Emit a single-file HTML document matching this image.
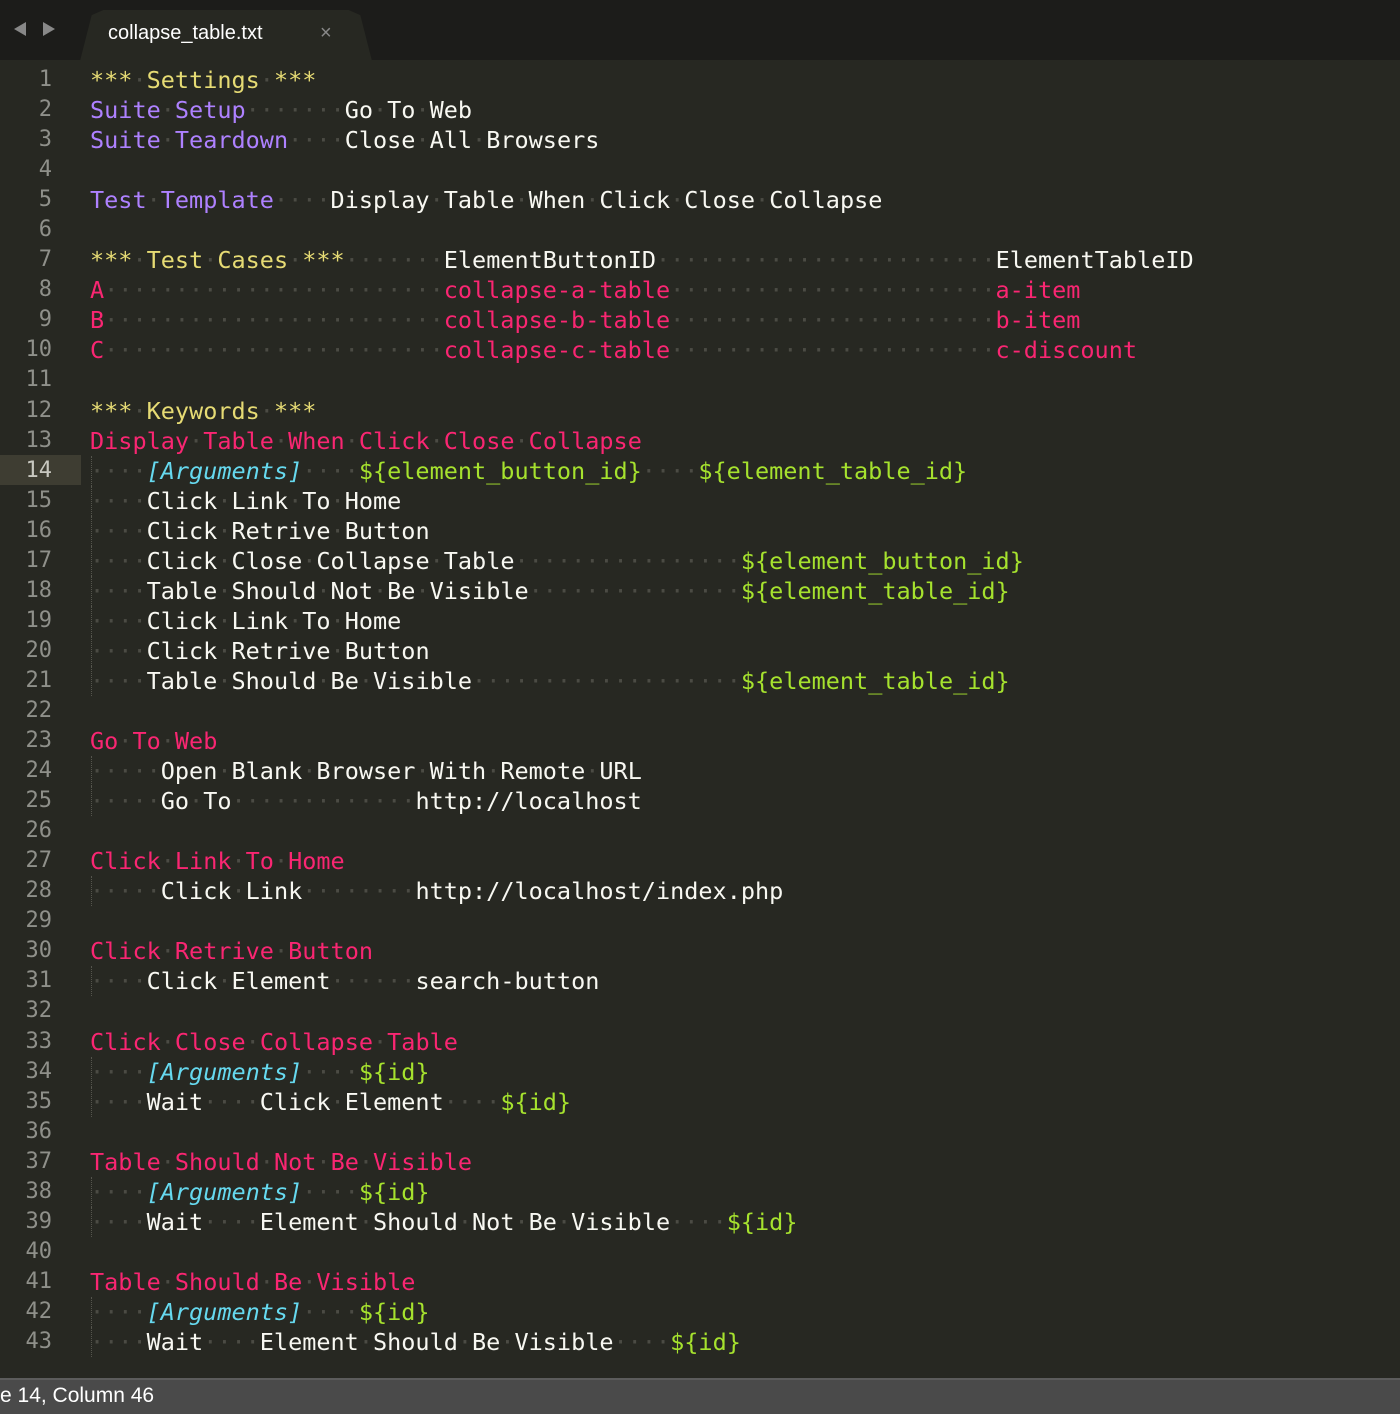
<!DOCTYPE html>
<html><head><meta charset="utf-8"><style>
html,body{margin:0;padding:0;}
body{width:1400px;height:1412px;background:#272822;position:relative;overflow:hidden;font-family:"DejaVu Sans Mono","Liberation Mono",monospace;}
#top{position:absolute;left:0;top:0;width:1400px;height:60px;background:#1c1c1a;}
#tab{position:absolute;left:80px;top:10px;width:292px;height:51px;background:#272822;border-radius:14px 14px 0 0;clip-path:polygon(0 100%,4% 10%,8% 0,92% 0,96% 10%,100% 100%);}
#tabt{position:absolute;left:108px;top:22px;font-family:"Liberation Sans",sans-serif;font-size:20px;color:#fff;}
#tabx{position:absolute;left:320px;top:22px;font-family:"Liberation Sans",sans-serif;font-size:20px;color:#888;}
.arr{position:absolute;top:22px;width:0;height:0;border-top:7px solid transparent;border-bottom:7px solid transparent;}
#gut{position:absolute;left:0;top:65px;width:60px;}
#gut div{height:30.05px;line-height:30px;text-align:right;color:#8f908a;font-size:22px;padding-right:8px;}
#gut div.cur{color:#c8c8c0;}
#hl{position:absolute;left:0;top:455px;width:81px;height:30px;background:#3e3d32;}
#code{position:absolute;left:90px;top:65px;}
#code div{height:30.05px;line-height:30px;font-size:23.5px;white-space:pre;color:#f8f8f2;position:relative;}
#code div.g::before{content:"";position:absolute;left:1px;top:0;bottom:0;border-left:1px dotted #55554d;}
i{font-style:normal;color:#4b4b44;}
.y{color:#e6db74}.p{color:#ae81ff}.r{color:#f92672}.gr{color:#a6e22e}.c{color:#66d9ef;font-style:italic}
#status{position:absolute;left:0;top:1378px;width:1400px;height:34px;background:#4a4a4a;border-top:2px solid #5c5c5c;}
#st{position:absolute;left:0;top:1384px;font-family:"Liberation Sans",sans-serif;font-size:21px;color:#fff;}
</style></head><body>
<div id="top"></div>
<div class="arr" style="left:14px;border-right:12px solid #888;"></div>
<div class="arr" style="left:43px;border-left:12px solid #888;"></div>
<div id="tab"></div>
<div id="tabt">collapse_table.txt</div>
<div id="tabx">×</div>
<div id="hl"></div>
<div id="gut">
<div>1</div><div>2</div><div>3</div><div>4</div><div>5</div><div>6</div><div>7</div><div>8</div><div>9</div><div>10</div><div>11</div><div>12</div><div>13</div><div class="cur">14</div><div>15</div><div>16</div><div>17</div><div>18</div><div>19</div><div>20</div><div>21</div><div>22</div><div>23</div><div>24</div><div>25</div><div>26</div><div>27</div><div>28</div><div>29</div><div>30</div><div>31</div><div>32</div><div>33</div><div>34</div><div>35</div><div>36</div><div>37</div><div>38</div><div>39</div><div>40</div><div>41</div><div>42</div><div>43</div>
</div>
<div id="code">
<div><span class="y">***<i>·</i>Settings<i>·</i>***</span></div>
<div><span class="p">Suite<i>·</i>Setup</span><i>·······</i>Go<i>·</i>To<i>·</i>Web</div>
<div><span class="p">Suite<i>·</i>Teardown</span><i>····</i>Close<i>·</i>All<i>·</i>Browsers</div>
<div></div>
<div><span class="p">Test<i>·</i>Template</span><i>····</i>Display<i>·</i>Table<i>·</i>When<i>·</i>Click<i>·</i>Close<i>·</i>Collapse</div>
<div></div>
<div><span class="y">***<i>·</i>Test<i>·</i>Cases<i>·</i>***</span><i>·······</i>ElementButtonID<i>························</i>ElementTableID</div>
<div><span class="r">A</span><i>························</i><span class="r">collapse-a-table</span><i>·······················</i><span class="r">a-item</span></div>
<div><span class="r">B</span><i>························</i><span class="r">collapse-b-table</span><i>·······················</i><span class="r">b-item</span></div>
<div><span class="r">C</span><i>························</i><span class="r">collapse-c-table</span><i>·······················</i><span class="r">c-discount</span></div>
<div></div>
<div><span class="y">***<i>·</i>Keywords<i>·</i>***</span></div>
<div><span class="r">Display<i>·</i>Table<i>·</i>When<i>·</i>Click<i>·</i>Close<i>·</i>Collapse</span></div>
<div class="g"><i>····</i><span class="c">[Arguments]</span><i>····</i><span class="gr">${element_button_id}</span><i>····</i><span class="gr">${element_table_id}</span></div>
<div class="g"><i>····</i>Click<i>·</i>Link<i>·</i>To<i>·</i>Home</div>
<div class="g"><i>····</i>Click<i>·</i>Retrive<i>·</i>Button</div>
<div class="g"><i>····</i>Click<i>·</i>Close<i>·</i>Collapse<i>·</i>Table<i>················</i><span class="gr">${element_button_id}</span></div>
<div class="g"><i>····</i>Table<i>·</i>Should<i>·</i>Not<i>·</i>Be<i>·</i>Visible<i>···············</i><span class="gr">${element_table_id}</span></div>
<div class="g"><i>····</i>Click<i>·</i>Link<i>·</i>To<i>·</i>Home</div>
<div class="g"><i>····</i>Click<i>·</i>Retrive<i>·</i>Button</div>
<div class="g"><i>····</i>Table<i>·</i>Should<i>·</i>Be<i>·</i>Visible<i>···················</i><span class="gr">${element_table_id}</span></div>
<div></div>
<div><span class="r">Go<i>·</i>To<i>·</i>Web</span></div>
<div class="g"><i>·····</i>Open<i>·</i>Blank<i>·</i>Browser<i>·</i>With<i>·</i>Remote<i>·</i>URL</div>
<div class="g"><i>·····</i>Go<i>·</i>To<i>·············</i>http://localhost</div>
<div></div>
<div><span class="r">Click<i>·</i>Link<i>·</i>To<i>·</i>Home</span></div>
<div class="g"><i>·····</i>Click<i>·</i>Link<i>········</i>http://localhost/index.php</div>
<div></div>
<div><span class="r">Click<i>·</i>Retrive<i>·</i>Button</span></div>
<div class="g"><i>····</i>Click<i>·</i>Element<i>······</i>search-button</div>
<div></div>
<div><span class="r">Click<i>·</i>Close<i>·</i>Collapse<i>·</i>Table</span></div>
<div class="g"><i>····</i><span class="c">[Arguments]</span><i>····</i><span class="gr">${id}</span></div>
<div class="g"><i>····</i>Wait<i>····</i>Click<i>·</i>Element<i>····</i><span class="gr">${id}</span></div>
<div></div>
<div><span class="r">Table<i>·</i>Should<i>·</i>Not<i>·</i>Be<i>·</i>Visible</span></div>
<div class="g"><i>····</i><span class="c">[Arguments]</span><i>····</i><span class="gr">${id}</span></div>
<div class="g"><i>····</i>Wait<i>····</i>Element<i>·</i>Should<i>·</i>Not<i>·</i>Be<i>·</i>Visible<i>····</i><span class="gr">${id}</span></div>
<div></div>
<div><span class="r">Table<i>·</i>Should<i>·</i>Be<i>·</i>Visible</span></div>
<div class="g"><i>····</i><span class="c">[Arguments]</span><i>····</i><span class="gr">${id}</span></div>
<div class="g"><i>····</i>Wait<i>····</i>Element<i>·</i>Should<i>·</i>Be<i>·</i>Visible<i>····</i><span class="gr">${id}</span></div>
</div>
<div id="status"></div>
<div id="st">e 14, Column 46</div>
</body></html>
